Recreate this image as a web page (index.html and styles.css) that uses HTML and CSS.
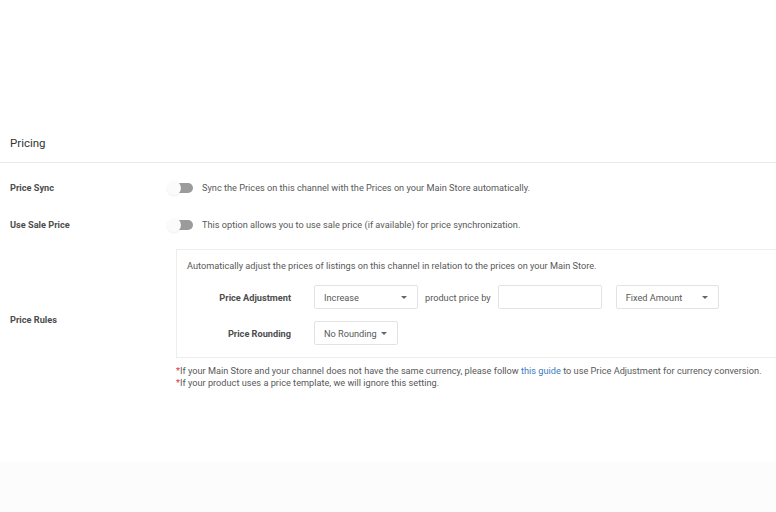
FILE: index.html
```html
<!DOCTYPE html>
<html>
<head>
<meta charset="utf-8">
<link rel="stylesheet" href="styles.css">
</head>
<body>
<div class="page">
  <div class="top-space"></div>
  <section class="card">
    <h2 class="card-title">Pricing</h2>
    <div class="form">
      <div class="row row-toggle">
        <div class="label">Price Sync</div>
        <div class="control">
          <span class="switch"><span class="knob"></span></span>
          <span class="desc">Sync the Prices on this channel with the Prices on your Main Store automatically.</span>
        </div>
      </div>
      <div class="row row-toggle">
        <div class="label">Use Sale Price</div>
        <div class="control">
          <span class="switch"><span class="knob"></span></span>
          <span class="desc">This option allows you to use sale price (if available) for price synchronization.</span>
        </div>
      </div>
      <div class="row row-rules">
        <div class="label">Price Rules</div>
        <div class="rules">
          <div class="rules-box">
            <p class="rules-intro">Automatically adjust the prices of listings on this channel in relation to the prices on your Main Store.</p>
            <div class="rule-line">
              <div class="rule-label">Price Adjustment</div>
              <div class="select sel-adjust"><span>Increase</span><span class="caret"></span></div>
              <span class="inline-text">product price by</span>
              <div class="input"></div>
              <div class="select sel-type"><span>Fixed Amount</span><span class="caret"></span></div>
            </div>
            <div class="rule-line">
              <div class="rule-label">Price Rounding</div>
              <div class="select sel-round"><span>No Rounding</span><span class="caret"></span></div>
            </div>
          </div>
          <p class="note"><span class="star">*</span>If your Main Store and your channel does not have the same currency, please follow <a class="link">this guide</a> to use Price Adjustment for currency conversion.</p>
          <p class="note"><span class="star">*</span>If your product uses a price template, we will ignore this setting.</p>
        </div>
      </div>
    </div>
  </section>
  <div class="filler"></div>
  <div class="footer-band"></div>
</div>
</body>
</html>
```

FILE: styles.css
```css
html, body {
  margin: 0;
  padding: 0;
  background: #ffffff;
  overflow: hidden;
}
body {
  font-family: Roboto, "Liberation Sans", Arial, sans-serif;
  color: #555;
  width: 776px;
  height: 512px;
}
.page {
  display: flex;
  flex-direction: column;
  height: 512px;
  width: 800px;
}
.top-space {
  height: 133px;
}
.card-title {
  margin: 0;
  padding: 0 10px;
  font-size: 11.5px;
  font-weight: 400;
  color: #333;
  line-height: 20px;
  height: 29px;
  border-bottom: 1px solid #e9e9e9;
}
.form {
  padding-top: 6px;
}
.row {
  display: flex;
  align-items: center;
}
.row-toggle {
  height: 37px;
}
.label {
  width: 158px;
  padding-left: 10px;
  font-size: 9.2px;
  font-weight: 700;
  color: #4d4d4d;
  flex-shrink: 0;
}
.control {
  display: flex;
  align-items: center;
}
.switch {
  position: relative;
  width: 26px;
  height: 14px;
  display: inline-block;
  margin-right: 9px;
  margin-left: -1px;
}
.switch::before {
  content: "";
  position: absolute;
  left: 8px;
  right: 0;
  top: 2px;
  height: 10px;
  border-radius: 5px;
  background: #9b9b9b;
}
.knob {
  position: absolute;
  left: 0;
  top: 0;
  width: 14px;
  height: 14px;
  border-radius: 50%;
  background: #fbfbfb;
  box-shadow: 0 1px 2px rgba(0,0,0,0.07);
}
.desc {
  font-size: 9.2px;
  color: #595959;
}
.row-rules {
  margin-top: 6px;
  align-items: center;
}
.rules {
  padding-left: 8px;
  flex: 1;
}
.rules-box {
  border: 1px solid #ededed;
  border-right: none;
  padding: 10px 0 12px 10px;
}
.rules-intro {
  margin: 0 0 13px;
  font-size: 9.2px;
  color: #595959;
  line-height: 12px;
}
.rule-line {
  display: flex;
  align-items: center;
  height: 24px;
  margin-bottom: 12px;
}
.rule-line:last-child {
  margin-bottom: 0;
}
.rule-label {
  width: 104px;
  text-align: right;
  font-size: 9.2px;
  font-weight: 700;
  color: #4d4d4d;
  margin-right: 23px;
}
.select {
  box-sizing: border-box;
  height: 24px;
  border: 1px solid #e3e3e3;
  border-radius: 2px;
  display: flex;
  align-items: center;
  justify-content: space-between;
  padding: 0 10px 0 9px;
  font-size: 9.2px;
  color: #595959;
}
.caret {
  width: 0;
  height: 0;
  border-left: 3.5px solid transparent;
  border-right: 3.5px solid transparent;
  border-top: 3.5px solid #666;
}
.sel-adjust { width: 104px; }
.sel-type { width: 103px; margin-left: 14px; }
.sel-round { width: 84px; }
.inline-text {
  font-size: 9.2px;
  color: #595959;
  margin: 0 7px;
}
.input {
  box-sizing: border-box;
  width: 104px;
  height: 24px;
  border: 1px solid #e3e3e3;
  border-radius: 2px;
}
.note {
  margin: 0;
  font-size: 9.2px;
  line-height: 12px;
  color: #595959;
}
.rules-box + .note {
  margin-top: 7px;
}
.star { color: #d9363e; }
.link { color: #3b7bbf; }
.filler { flex: 1; }
.footer-band {
  height: 50px;
  background: #fcfcfc;
}
```
